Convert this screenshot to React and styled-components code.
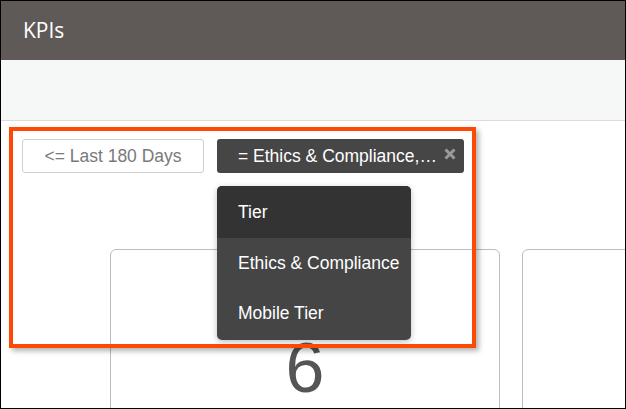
import React from 'react';
import styled, { createGlobalStyle } from 'styled-components';

const GlobalStyle = createGlobalStyle`
  html, body {
    margin: 0;
    padding: 0;
    background: #ffffff;
  }
  * {
    box-sizing: border-box;
  }
`;

const Frame = styled.div`
  position: relative;
  width: 626px;
  height: 409px;
  border: 1px solid #000;
  overflow: hidden;
  background: #fff;
  font-family: "Liberation Sans", Arial, sans-serif;
`;

const TopBar = styled.header`
  height: 59px;
  display: flex;
  align-items: center;
  padding-left: 22px;
  background: #5f5a58;
  color: #fff;
  font-family: "Open Sans", "Noto Sans", sans-serif;
  font-size: 21px;
  padding-bottom: 1px;
`;

const ToolBand = styled.div`
  height: 61px;
  background: #f6f7f7;
  border-bottom: 1px solid #dcdcdc;
`;

const Content = styled.main`
  padding: 18px 0 0 21px;
`;

const FilterRow = styled.div`
  display: flex;
  gap: 13px;
`;

const DateFilter = styled.div`
  width: 182px;
  height: 34px;
  display: flex;
  align-items: center;
  justify-content: center;
  border: 1px solid #cfcfcf;
  border-radius: 3px;
  color: #7a7a7a;
  font-size: 17.5px;
`;

const ChipWrap = styled.div`
  position: relative;
`;

const Chip = styled.div`
  width: 247px;
  height: 34px;
  display: flex;
  align-items: center;
  padding: 0 8px 0 21px;
  background: #464646;
  border-radius: 3px;
  color: #fff;
  font-size: 17.5px;
`;

const ChipLabel = styled.span`
  flex: 1;
  white-space: nowrap;
  overflow: hidden;
`;

const CloseIcon = styled.svg`
  width: 12px;
  height: 12px;
  margin-top: -5px;
  flex: none;
`;

const Menu = styled.ul`
  position: absolute;
  top: 47px;
  left: 0;
  width: 194px;
  margin: 0;
  padding: 0 0 2px;
  list-style: none;
  background: #454545;
  border-radius: 5px;
  overflow: hidden;
  box-shadow: 0 2px 6px rgba(0, 0, 0, 0.25);
  z-index: 2;
`;

const MenuItem = styled.li`
  height: ${(p) => (p.$active ? 52 : 50)}px;
  display: flex;
  align-items: center;
  padding-left: 21px;
  background: ${(p) => (p.$active ? '#333333' : 'transparent')};
  color: #fff;
  font-size: 17.5px;
`;

const CardRow = styled.div`
  display: flex;
  gap: 22px;
  margin: 76px 0 0 88px;
`;

const KpiCard = styled.section`
  flex: none;
  width: ${(p) => p.$width}px;
  height: 200px;
  border: 1px solid #bdbdbd;
  border-radius: 6px;
  display: flex;
  justify-content: center;
  padding-top: 83px;
`;

const KpiValue = styled.span`
  font-size: 70px;
  line-height: 1;
  color: #555;
`;

const Highlight = styled.div`
  position: absolute;
  left: 8px;
  top: 126px;
  width: 467px;
  height: 221px;
  border: 4px solid #fc4a06;
  box-shadow: 3px 3px 5px rgba(0, 0, 0, 0.3);
  pointer-events: none;
  z-index: 3;
`;

const menuItems = ['Tier', 'Ethics & Compliance', 'Mobile Tier'];

export default function App() {
  return (
    <>
      <GlobalStyle />
      <Frame>
        <TopBar>KPIs</TopBar>
        <ToolBand />
        <Content>
          <FilterRow>
            <DateFilter>&lt;= Last 180 Days</DateFilter>
            <ChipWrap>
              <Chip>
                <ChipLabel>= Ethics &amp; Compliance,…</ChipLabel>
                <CloseIcon viewBox="0 0 12 12">
                  <path d="M1.5 1.5 L10.5 10.5 M10.5 1.5 L1.5 10.5" stroke="#9a9a9a" strokeWidth="3" />
                </CloseIcon>
              </Chip>
              <Menu>
                {menuItems.map((item, i) => (
                  <MenuItem key={item} $active={i === 0}>{item}</MenuItem>
                ))}
              </Menu>
            </ChipWrap>
          </FilterRow>
          <CardRow>
            <KpiCard $width={390}>
              <KpiValue>6</KpiValue>
            </KpiCard>
            <KpiCard $width={390} />
          </CardRow>
        </Content>
        <Highlight />
      </Frame>
    </>
  );
}
